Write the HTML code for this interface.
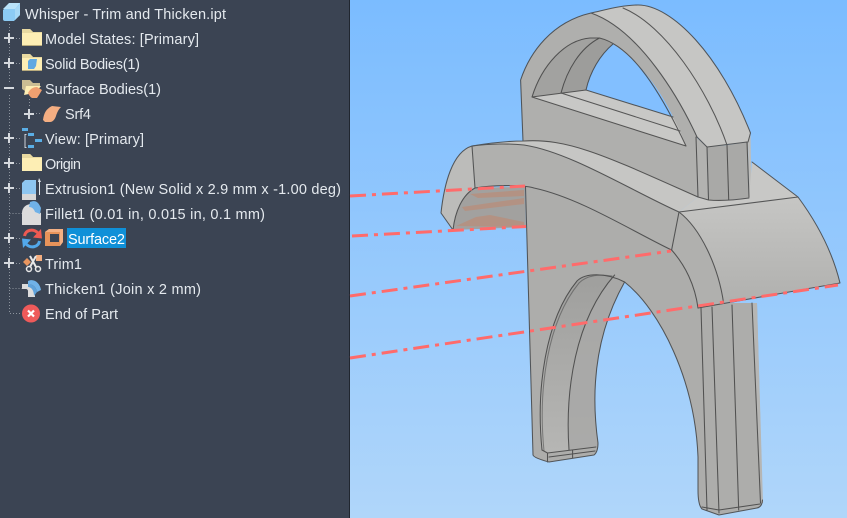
<!DOCTYPE html>
<html><head><meta charset="utf-8"><style>
html,body{margin:0;padding:0;width:847px;height:518px;overflow:hidden;background:#3b4453}
svg{position:absolute;left:0;top:0;display:block}
text{font-family:"Liberation Sans",sans-serif;font-size:14.500px;fill:#e4e9ee}
</style></head><body>
<svg width="847" height="518" viewBox="0 0 847 518" xmlns="http://www.w3.org/2000/svg">
<defs>
<linearGradient id="bg" x1="0" y1="0" x2="0" y2="1"><stop offset="0" stop-color="#7bbcff"/><stop offset="1" stop-color="#b0d6fa"/></linearGradient>
<linearGradient id="blk" x1="0" y1="0" x2="0" y2="1"><stop offset="0" stop-color="#c6c6c4"/><stop offset="1" stop-color="#b0b0ae"/></linearGradient>
<linearGradient id="arc" x1="0" y1="0" x2="0" y2="1"><stop offset="0" stop-color="#9f9f9d"/><stop offset="1" stop-color="#b6b6b4"/></linearGradient>
</defs>
<rect x="349" width="498" height="518" fill="url(#bg)"/>
<rect width="349" height="518" fill="#3b4453"/>
<rect x="349" width="1" height="518" fill="#20262f"/>

<!-- tree dots -->
<g stroke="#8d949e" stroke-width="1" stroke-dasharray="1 2" fill="none">
<path d="M9.500 24V32M9.500 44V57M9.500 69V82M9.500 95V132M9.500 144V157M9.500 169V182M9.500 194V232M9.500 244V257M9.500 269V313.500H22M16 38.500H21M16 63.500H21M16 138.500H21M16 163.500H21M16 188.500H21M16 238.500H21M16 263.500H21M9.500 213.500H22M9.500 288.500H22M29.500 99V107M36 113.500H42"/>
</g>
<!-- plus / minus -->
<g fill="#d5d9de">
<path d="M4 37h10v2H4zM8 33h2v10H8zM4 62h10v2H4zM8 58h2v10H8zM4 87h10v2H4zM24 113h10v2H24zM28 109h2v10h-2zM4 137h10v2H4zM8 133h2v10H8zM4 162h10v2H4zM8 158h2v10H8zM4 187h10v2H4zM8 183h2v10H8zM4 237h10v2H4zM8 233h2v10H8zM4 262h10v2H4zM8 258h2v10H8z"/>
</g>

<!-- title cube -->
<path d="M3 10L10 3H20V15L14 21H5Q3 21 3 19Z" fill="#8ccbf4"/><path d="M3 9L9 3H20L15 9Z" fill="#b9e2f9"/><path d="M15 9L20 4V15L15 20Z" fill="#a6d8f6"/>
<!-- folders -->
<path d="M22 29h8l3 3h9v14H22z" fill="#fdeeb4"/><path d="M22 45h20v1H22z" fill="#b9ab7c"/><path d="M22 29h8l3 3h9v1H22z" fill="#e8d9a0"/>
<path d="M22 54h8l3 3h9v14H22z" fill="#fdeeb4"/><path d="M22 70h20v1H22z" fill="#b9ab7c"/><path d="M22 54h8l3 3h9v1H22z" fill="#e8d9a0"/>
<path d="M28 61l2-2h7l-1 7-2 3h-6z" fill="#5fa8e2"/>
<path d="M22 80h8l3 3h7v3H28l-3 5-3-2z" fill="#cbbd93"/><path d="M26 86h15l-4 5-8 3-5 1z" fill="#fdeeb4"/><path d="M28 93c2-4 5-6 9-6l5 3-3 5-2 3h-5c-2-1-3-3-4-5z" fill="#f0a070"/>
<path d="M43 120c1-7 3-11 9-14l9 1c-3 3-4 6-5 9-1 3-3 6-6 6h-5z" fill="#f4ae82"/>
<g fill="#5aaee6"><path d="M22 128h6v3h-6zM28 133h6v3h-6zM35 139h7v3h-7zM28 145h6v3h-6z"/></g>
<path d="M26.500 134.500h-1.500v13h1.500" stroke="#cdd2d8" fill="none"/>
<path d="M22 154h8l3 3h9v14H22z" fill="#fdeeb4"/><path d="M22 154h8l3 3h9v1H22z" fill="#e8d9a0"/>
<!-- extrusion -->
<path d="M22 183l3-3h11v14l-2 0H22z" fill="#8ec6f0"/><path d="M22 194h14v6H22z" fill="#d8d8d8"/><path d="M39 178l2 4h-1v13h-1v-13h-1z" fill="#e4e8ec"/>
<!-- fillet -->
<path d="M22 213c0-6 5-9 9-9l4 6 6 3v12H22z" fill="#dcdcdc"/><path d="M30 202c5-2 8-1 11 6l-1 6-5-2c-1-3-3-5-6-5z" fill="#70b2e8"/>
<!-- surface2 rotate -->
<path d="M24.500 236C25.500 230 33 228 38 233" fill="none" stroke="#ee5a52" stroke-width="3"/><path d="M42 238.500L33 237.500L41 229Z" fill="#ee5a52"/>
<path d="M39.500 241C38.500 247 31 249 26 244" fill="none" stroke="#52a8ea" stroke-width="3"/><path d="M22 238.500L31 239.500L23 248Z" fill="#52a8ea"/>
<path d="M45 232l4-3h14v13l-3 4H45z" fill="#e7935a"/><path d="M50 234h9v8h-9z" fill="#3b4453"/><path d="M45 232l4-3h14l-3 3zM60 232l3-3v13l-3 4z" fill="#f3b084"/>
<!-- trim -->
<path d="M23 262l4-4 4 4-4 4z" fill="#e8955f"/><path d="M36 255h6v6h-6z" fill="#f3ad7f"/>
<path d="M30 256l6 11M36 256l-6 11" stroke="#e8e8e8" stroke-width="2" fill="none"/><circle cx="29" cy="269" r="2.500" fill="none" stroke="#e8e8e8" stroke-width="1.500"/><circle cx="38" cy="269" r="2.500" fill="none" stroke="#e8e8e8" stroke-width="1.500"/>
<!-- thicken -->
<path d="M22 284h7c3 0 6 3 6 6v7h-7v-6c0-1-1-2-2-2h-4z" fill="#dcdcdc"/><path d="M28 281c6-3 12 2 13 9l-4 2c-1-5-4-8-9-8z" fill="#70b2e8"/><path d="M28 284c5 0 8 3 9 8l-3 4c0-6-3-9-6-9z" fill="#5fa2da"/>
<!-- end of part -->
<circle cx="31" cy="313.500" r="9" fill="#ee5a5a"/><path d="M28 310.500l6 6M34 310.500l-6 6" stroke="#fff" stroke-width="2.200"/>

<!-- selection -->
<rect x="67" y="228" width="59" height="20" fill="#0f90d8"/>

<!-- labels -->
<text x="25" y="19" textLength="201" lengthAdjust="spacing">Whisper - Trim and Thicken.ipt</text>
<text x="45" y="44" textLength="154" lengthAdjust="spacing">Model States: [Primary]</text>
<text x="45" y="69" textLength="95" lengthAdjust="spacing">Solid Bodies(1)</text>
<text x="45" y="94" textLength="116" lengthAdjust="spacing">Surface Bodies(1)</text>
<text x="65" y="119" textLength="26" lengthAdjust="spacing">Srf4</text>
<text x="45" y="144" textLength="99" lengthAdjust="spacing">View: [Primary]</text>
<text x="45" y="169" textLength="36" lengthAdjust="spacing">Origin</text>
<text x="45" y="194" textLength="296" lengthAdjust="spacing">Extrusion1 (New Solid x 2.9 mm x -1.00 deg)</text>
<text x="45" y="219" textLength="220" lengthAdjust="spacing">Fillet1 (0.01 in, 0.015 in, 0.1 mm)</text>
<text x="68" y="244" textLength="57" lengthAdjust="spacing" style="fill:#fff">Surface2</text>
<text x="45" y="269" textLength="37" lengthAdjust="spacing">Trim1</text>
<text x="45" y="294" textLength="156" lengthAdjust="spacing">Thicken1 (Join x 2 mm)</text>
<text x="45" y="319" textLength="73" lengthAdjust="spacing">End of Part</text>

<!-- MODEL fills -->
<g stroke-linejoin="round">
<!-- handle front face -->
<path d="M520.600 80C530 52 552 22 591 13C640 30 680 100 697 137L698 197L640 175L564 145L523 141Z" fill="#afafad"/>
<!-- handle top band -->
<path d="M591 13C605 10 622 5 638 5C672 5 720 55 750.500 133L748 142L707 147L697 137C680 100 640 30 591 13Z" fill="#c6c6c4"/>
<!-- hole inner faces -->
<path d="M532 97C542 65 565 40 590 38L599.500 38C580 48 567 70 561 93Z" fill="#a2a2a0"/>
<path d="M561 93C567 70 580 48 599.500 38L613 44C600 55 590 72 586 90Z" fill="#9d9d9b"/>
<!-- hole sky -->
<path d="M586 90C590 72 600 55 613 44C635 58 658 85 673 117Z" fill="#82bfff"/>
<!-- ledge -->
<path d="M532 97L586 90L673 117L680 131L686 146Z" fill="#c8c8c6"/>
<!-- post -->
<path d="M696 137L707 147L708.500 200L698 197Z" fill="#b2b2b0"/>
<path d="M707 147L727 145L748 142L749 198L728 200L708.500 200Z" fill="#a9a9a7"/>
<path d="M748 142L750.500 133L751.500 197L749 198Z" fill="#bdbdbb"/>

<!-- block top around post -->
<path d="M679 212L698 197L708.500 200H728L749 198L752 162L798 197Z" fill="#c8c8c6"/>

<!-- main body -->
<path d="M475 188L525 186L534 188C580 198 630 230 671.600 250L679 212C700 228 718 265 723.600 303L757 303L762.500 500Q762 507 757 508L719 515L702 509Q698 505 698 490L698 457C695 380 660 310 624.600 282C592 340 592 400 598 443Q598 452 594 455L549 462Q534 458 533 455L525.500 187Z" fill="#adadab"/>
<!-- arch recess -->
<path d="M542 450C536 390 545 320 577 281C585 273 605 272 624.600 282C592 340 592 400 598 443L596 447L547.500 453Z" fill="url(#arc)"/>
<path d="M569 450C565 390 575 320 614.600 275L624.600 282C592 340 592 400 598 443L596 447Z" fill="#a9a9a7" opacity=".9"/>
<!-- right leg strip -->
<path d="M752 303L757 303L763 503L760.500 503Z" fill="#b6b6b4"/>

<!-- arch top band -->
<path d="M472 146C490 143 510 141 524 141C570 138 610 158 698 197L679 212C630 190 570 152 524 145C510 143.500 490 143.500 472 146Z" fill="#c6c6c4"/>
<!-- arch front band -->
<path d="M472 146C490 143.500 510 143.500 524 145C570 152 630 190 679 212L671.600 250C630 230 580 198 534 188C520 184 490 185.500 475 188Z" fill="#b0b0ae"/>
<!-- left wing -->
<path d="M472 146C452 152 444 185 441 213L453 230C455 212 462 195 475 188Z" fill="#bcbcba"/>
<!-- inner face -->
<path d="M453 230C455 212 462 195 475 188L525 187L526 227Z" fill="#a2a19f"/>
<path d="M470 194L524 190V196L478 198ZM462 207L524 198V204L465 211ZM456 226L476 217L490 215L524 222V227Z" fill="#b88e7c" opacity=".8"/>
<!-- right block -->
<path d="M679 212L798 197C815 220 832 250 840 283L723.600 303C718 265 700 228 679 212Z" fill="url(#blk)"/>
<!-- corner bands -->
<path d="M679 212C700 228 718 265 723.600 303L698 308C695 285 685 265 671.600 250Z" fill="#b0b0ae"/>
</g>

<!-- edges -->
<g fill="none" stroke="#3e3e3e" stroke-width="1.050" stroke-linejoin="round" stroke-linecap="round" opacity=".82">
<!-- handle outline -->
<path d="M523 141L520.600 80C530 52 552 22 591 13C605 10 622 5 638 5C672 5 720 55 750.500 133L748 142"/>
<path d="M591 13C640 30 680 100 697 137L707 147"/>
<path d="M623 8C665 25 708 90 727 145"/>
<!-- hole -->
<path d="M532 97C542 65 565 40 590 38L599.500 38C628 45 655 80 686 146L532 97L586 90L673 117"/>
<path d="M561 93C567 70 580 48 599.500 38M586 90C590 72 600 55 613 44M561 93L680 131"/>
<!-- post -->
<path d="M696 137L698 197L708.500 200C720 201 735 200 749 198M707 147L708.500 200M727 145L728.700 199.500M747 142L749 197M707 147L747 142"/>
<!-- arch -->
<path d="M472 146C490 143 510 141 524 141C570 138 610 158 698 197"/>
<path d="M472 146C490 143.500 510 143.500 524 145C570 152 630 190 679 212L798 197M752 162L798 197C815 220 832 250 840 283L698 308M679 212L671.600 250"/>
<path d="M679 212C700 228 718 265 723.600 303M671.600 250C685 265 695 285 698 308"/>
<path d="M475 188C490 185.500 520 184 534 188C580 198 630 230 671.600 250"/>
<path d="M472 146L475 188M472 146C452 152 444 185 441 213L453 230C455 212 462 195 475 188"/>
<!-- body left and arch -->
<path d="M525.500 187L533 455Q534 458 549 462L594 455Q598 452 598 443C592 400 592 340 624.600 282C660 310 695 380 698 457L698 490Q698 505 702 509L719 515L757 508Q762 507 762.500 500"/>
<path d="M542 450C536 390 545 320 577 281C585 273 605 272 624.600 282"/>
<path d="M544 451C538 390 547 322 579 283C587 275 600 274 612 276" opacity=".6"/>
<path d="M569 450C565 390 575 320 614.600 275"/>
<path d="M542 450L547.500 453L596 447M547.500 453V462M549 457L595 451M572.600 450V458"/>
<path d="M701 308L707 510M712 307L719 513M732 305L738.700 510M752 303L760.500 503M702 507L719 510L760 504"/>
</g>

<!-- red lines -->
<g fill="none" stroke="#ff6b6b" stroke-width="3" stroke-dasharray="16 6 4 6">
<path d="M350 196L525 186"/>
<path d="M352 236L526 226.500"/>
<path d="M350 296L671 251"/>
<path d="M350 358L838 285"/>
</g>
</svg>
</body></html>
